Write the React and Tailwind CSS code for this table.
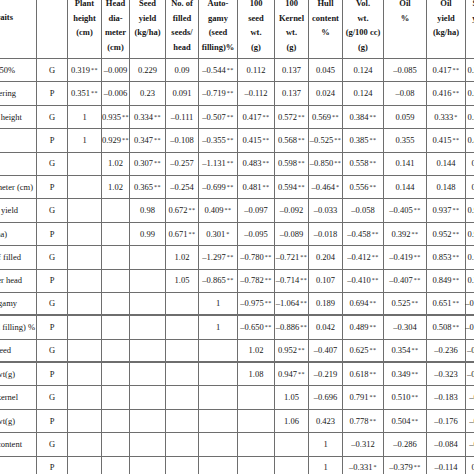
import React from "react";

const headers = [
  ["Plant", "height", "(cm)"],
  ["Head", "dia-", "meter", "(cm)"],
  ["Seed", "yield", "(kg/ha)"],
  ["No. of", "filled", "seeds/", "head"],
  ["Auto-", "gamy", "(seed", "filling)%"],
  ["100", "seed", "wt.", "(g)"],
  ["100", "Kernel", "wt.", "(g)"],
  ["Hull", "content", "%"],
  ["Vol.", "wt.", "(g/100 cc)", "(g)"],
  ["Oil", "%"],
  ["Oil", "yield", "(kg/ha)"],
  ["Seed", "yield"],
];

const rows = [
  { t: "Days to 50%", pr: "pr-[21px]", g: "G", v: ["0.319**", "–0.009", "0.229", "0.09", "–0.544**", "0.112", "0.137", "0.045", "0.124", "–0.085", "0.417**", "0.312**"] },
  { t: "flowering", pr: "pr-[20px]", g: "P", v: ["0.351**", "–0.006", "0.23", "0.091", "–0.719**", "–0.112", "0.137", "0.024", "0.124", "–0.08", "0.416**", "0.306**"] },
  { t: "Plant height", pr: "pr-[14px]", g: "G", v: ["1", "0.935**", "0.334**", "–0.111", "–0.507**", "0.417**", "0.572**", "0.569**", "0.384**", "0.059", "0.333*", "0.321**"] },
  { t: "", pr: "pr-[14px]", g: "P", v: ["1", "0.929**", "0.347**", "–0.108", "–0.355**", "0.415**", "0.568**", "–0.525**", "0.385**", "0.355", "0.415**", "0.413**"] },
  { t: "", pr: "pr-[14px]", g: "G", v: ["", "1.02", "0.307**", "–0.257", "–1.131**", "0.483**", "0.598**", "–0.850**", "0.558**", "0.141", "0.144", "0.127"] },
  { t: "Head diameter (cm)", pr: "pr-[3px]", g: "P", v: ["", "1.02", "0.365**", "–0.254", "–0.699**", "0.481**", "0.594**", "–0.464*", "0.556**", "0.144", "0.148", "0.131"] },
  { t: "Seed yield", pr: "pr-[18px]", g: "G", v: ["", "", "0.98", "0.672**", "0.409**", "–0.097", "–0.092", "–0.033", "–0.058", "–0.405**", "0.937**", "0.913**"] },
  { t: "(kg/ha)", pr: "pr-[29px]", g: "P", v: ["", "", "0.99", "0.671**", "0.301*", "–0.095", "–0.089", "–0.018", "–0.458**", "0.392**", "0.952**", "0.928**"] },
  { t: "No. of filled", pr: "pr-[15px]", g: "G", v: ["", "", "", "1.02", "–1.297**", "–0.780**", "–0.721**", "0.204", "–0.412**", "–0.419**", "0.853**", "0.752**"] },
  { t: "seeds per head", pr: "pr-[14px]", g: "P", v: ["", "", "", "1.05", "–0.865**", "–0.782**", "–0.714**", "0.107", "–0.410**", "–0.407**", "0.849**", "0.748**"] },
  { t: "Autogamy", pr: "pr-[19px]", g: "G", thick: true, v: ["", "", "", "", "1", "–0.975**", "–1.064**", "0.189", "0.694**", "0.525**", "0.651**", "–0.342**"] },
  { t: "(seed filling) %", pr: "pr-[1px]", g: "P", v: ["", "", "", "", "1", "–0.650**", "–0.886**", "0.042", "0.489**", "–0.304", "0.508**", "–0.327**"] },
  { t: "100 seed", pr: "pr-[25px]", g: "G", thick: true, v: ["", "", "", "", "", "1.02", "0.952**", "–0.407", "0.625**", "0.354**", "–0.236", "–0.281*"] },
  { t: "wt(g)", pr: "pr-[21px]", g: "P", v: ["", "", "", "", "", "1.08", "0.947**", "–0.219", "0.618**", "0.349**", "–0.323", "–0.301*"] },
  { t: "100 kernel", pr: "pr-[18px]", g: "G", v: ["", "", "", "", "", "", "1.05", "–0.696", "0.791**", "0.510**", "–0.183", "–0.218"] },
  { t: "wt(g)", pr: "pr-[21px]", g: "P", v: ["", "", "", "", "", "", "1.06", "0.423", "0.778**", "0.504**", "–0.176", "–0.205"] },
  { t: "Hull content", pr: "pr-[14px]", g: "G", v: ["", "", "", "", "", "", "", "1", "–0.312", "–0.286", "–0.084", "–0.122"] },
  { t: "", pr: "pr-[14px]", g: "P", v: ["", "", "", "", "", "", "", "1", "–0.331*", "–0.379**", "–0.114", "0.098"] },
];

function Val({ s }) {
  const m = s.match(/^(.*?)(\**)$/);
  return (
    <span className="whitespace-nowrap">
      {m[1]}
      {m[2] && (
        <sup className="text-[6px] tracking-[0.5px] relative -top-[1px] ml-[1px]">{m[2]}</sup>
      )}
    </span>
  );
}

export default function App() {
  return (
    <div
      className="w-[474px] h-[474px] overflow-hidden bg-white text-[#161616]"
      style={{ fontFamily: '"Liberation Serif", "Times New Roman", serif' }}
    >
      <div className="grid grid-cols-[36px_30px_33px_27px_35px_32px_38px_36px_33px_33px_40px_42px_38px_30px] grid-rows-[58px_repeat(18,22.4px)] gap-px bg-[#6e6e6e] w-max text-[8.5px]">
        {/* header */}
        <div className="bg-white overflow-hidden flex justify-end items-start pt-[10px] pr-[23px]">
          <span className="font-bold leading-[14.5px] whitespace-nowrap">Traits</span>
        </div>
        <div className="bg-white" />
        {headers.map((h, i) => (
          <div key={i} className="bg-white flex flex-col items-center overflow-visible">
            <div className="-mt-[4px] flex flex-col items-center font-bold leading-[14.5px] whitespace-nowrap">
              {h.map((l, j) => (
                <span key={j}>{l}</span>
              ))}
            </div>
          </div>
        ))}
        {/* body */}
        {rows.map((r, ri) => (
          <React.Fragment key={ri}>
            <div className={`bg-white overflow-hidden flex items-center justify-end ${r.pr} ${r.thick ? "mb-px" : ""}`}>
              <span className="whitespace-nowrap">{r.t}</span>
            </div>
            <div className={`bg-white flex items-center justify-center ${r.thick ? "mb-px" : ""}`}>{r.g}</div>
            {r.v.map((v, ci) => (
              <div
                key={ci}
                className={`bg-white flex items-center justify-center ${r.thick ? "mb-px" : ""}`}
              >
                {v && <Val s={v} />}
              </div>
            ))}
          </React.Fragment>
        ))}
      </div>
    </div>
  );
}
